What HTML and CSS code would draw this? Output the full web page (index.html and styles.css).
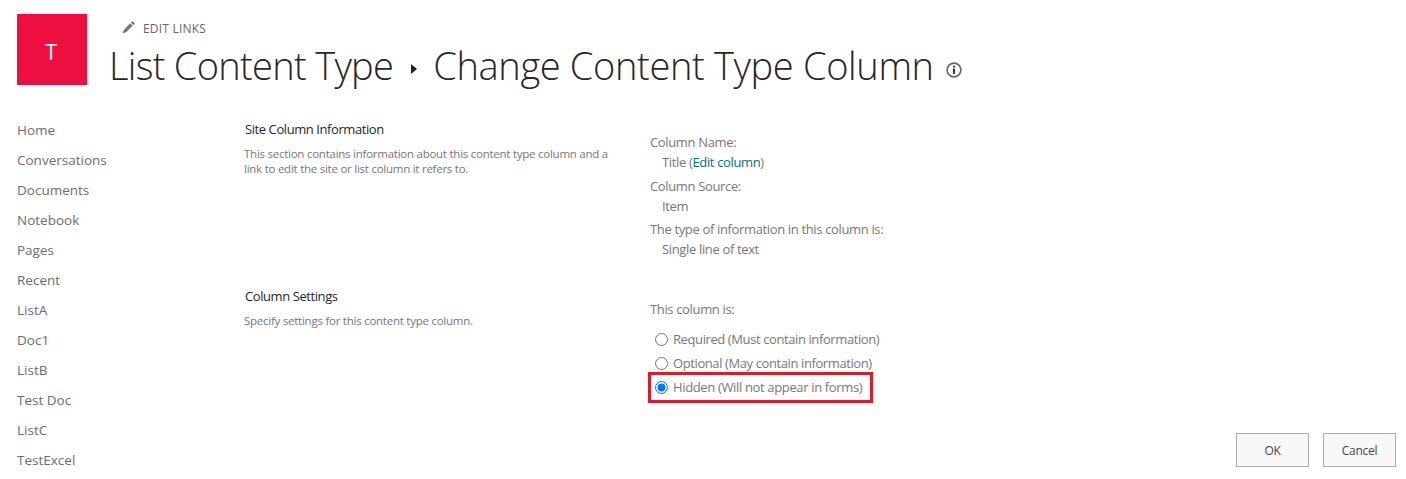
FILE: index.html
```
<!DOCTYPE html>
<html lang="en">
<head>
<meta charset="utf-8">
<title>Change Content Type Column</title>
<link rel="stylesheet" href="styles.css">
</head>
<body>
<header class="header">
  <a class="logo">T</a>
  <div class="heading">
    <a class="edit-links">
      <svg class="pencil" viewBox="0 0 14 14"><path d="M.6 13.400l1.500-4L8.800 2.500l2.700 2.700L4.700 11.900z" fill="#777"/><path d="M9.700 1.600l.9-.9q.7-.5 1.400.1l1.200 1.200q.6.700.1 1.400l-.9.900z" fill="#666"/></svg>
      <span>EDIT LINKS</span>
    </a>
    <h1 class="title">
      <span class="crumb">List Content Type</span>
      <svg class="arrow" viewBox="0 0 6 10"><path d="M0 0l6 5-6 5z" fill="#222"/></svg>
      <span class="current">Change Content Type Column</span>
      <svg class="info" viewBox="0 0 16 16"><circle cx="8" cy="8" r="6.900" fill="none" stroke="#666" stroke-width="1.600"/><path d="M7 3.700h2v1.800H7zM7 6.600h2v5.400H7z" fill="#333"/></svg>
    </h1>
  </div>
</header>
<div class="body">
  <nav class="nav">
    <a>Home</a><a>Conversations</a><a>Documents</a><a>Notebook</a><a>Pages</a><a>Recent</a><a>ListA</a><a>Doc1</a><a>ListB</a><a>Test Doc</a><a>ListC</a><a>TestExcel</a>
  </nav>
  <main class="main">
    <section class="section info-section">
      <div class="about">
        <h2>Site Column Information</h2>
        <p>This section contains information about this content type column and a<br>link to edit the site or list column it refers to.</p>
      </div>
      <dl class="facts">
        <dt>Column Name:</dt><dd>Title (<a class="link">Edit column</a>)</dd>
        <dt>Column Source:</dt><dd>Item</dd>
        <dt>The type of information in this column is:</dt><dd>Single line of text</dd>
      </dl>
    </section>
    <section class="section">
      <div class="about">
        <h2>Column Settings</h2>
        <p>Specify settings for this content type column.</p>
      </div>
      <div class="settings">
        <div class="prompt">This column is:</div>
        <label class="option"><input type="radio" name="col"><span>Required (Must contain information)</span></label>
        <label class="option"><input type="radio" name="col"><span>Optional (May contain information)</span></label>
        <label class="option marked"><input type="radio" name="col" checked><span>Hidden (Will not appear in forms)</span></label>
      </div>
    </section>
    <div class="buttons"><button>OK</button><button>Cancel</button></div>
  </main>
</div>
</body>
</html>
```
FILE: styles.css
```
* { box-sizing: border-box; }
body { margin: 0; height: 479px; overflow: hidden; background: #fff; color: #777; font: 13px/20px "Open Sans", "Noto Sans", sans-serif; letter-spacing: -0.35px; }
h1, h2, p, dl, dd { margin: 0; font-weight: 400; }
.header { display: flex; height: 115px; padding: 14px 0 0 17px; }
.logo { width: 70px; height: 71px; background: #ed0f40; color: #fff; font-size: 22px; line-height: 74px; text-align: center; padding-right: 2px; }
.heading { padding: 4px 0 0 23px; }
.edit-links { display: flex; align-items: center; height: 21px; padding-left: 12px; gap: 8px; color: #666; font-size: 12px; letter-spacing: 0.2px; }
.pencil { width: 13px; height: 13px; margin-top: -2px; }
.title { display: flex; align-items: center; height: 52px; color: #262626; font-size: 38px; font-weight: 300; line-height: 52px; letter-spacing: -0.35px; white-space: nowrap; margin-left: -1px; }
.crumb { letter-spacing: -0.7px; }
.arrow { width: 6px; height: 10px; margin: 7px 16px 0 18px; }
.info { width: 16px; height: 16px; margin: 10px 0 0 12px; }
.body { display: flex; }
.nav { display: flex; flex-direction: column; width: 244px; padding-left: 17px; font-size: 13.500px; line-height: 30px; letter-spacing: 0; color: #6c6c6c; }
.main { flex: 1; }
.section { display: grid; grid-template-columns: 406px 1fr; }
.info-section { height: 167px; }
.about { padding-top: 4px; }
.about h2 { padding-left: 1px; color: #262626; font-size: 13px; line-height: 20px; letter-spacing: -0.42px; }
.about p { padding-top: 7px; font-size: 11.500px; line-height: 15px; letter-spacing: -0.25px; white-space: nowrap; }
.facts { padding-top: 17px; }
.facts dt { height: 20px; }
.facts dd { height: 23.500px; padding-left: 12px; }
.link { color: #0b6e75; }
.settings { padding-top: 17px; }
.prompt { height: 28px; }
.option { display: flex; align-items: center; width: 225px; height: 24px; margin-left: -2px; padding-left: 7px; gap: 5px; white-space: nowrap; }
.option:not(.marked) span { letter-spacing: -0.4px; }
.option input { width: 13px; height: 13px; margin: 0; }
.option span { margin-top: -1px; }
.marked { height: 31px; margin-top: -3px; border: 3px solid #d71f2b; padding-left: 4px; }
.buttons { display: flex; justify-content: flex-end; gap: 14px; padding: 30px 10px 0 0; }
.buttons button { width: 73px; height: 34px; padding: 1px 0 0; border: 1px solid #ababab; background: #f8f8f8; color: #444; font: 12px/20px "Open Sans", sans-serif; letter-spacing: -0.3px; }
```
